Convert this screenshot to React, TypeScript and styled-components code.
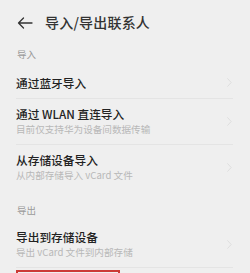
import React from "react";
import styled, { createGlobalStyle } from "styled-components";

const GlobalStyle = createGlobalStyle`
  html, body {
    margin: 0;
    padding: 0;
    background: #efefef;
  }
  body {
    font-family: "Noto Sans CJK SC", "Noto Sans", sans-serif;
    overflow: hidden;
  }
`;

type Item = { title: string; sub?: string };

const importItems: Item[] = [
  { title: "通过蓝牙导入" },
  { title: "通过 WLAN 直连导入", sub: "目前仅支持华为设备间数据传输" },
  { title: "从存储设备导入", sub: "从内部存储导入 vCard 文件" },
];

const exportItems: Item[] = [{ title: "导出到存储设备", sub: "导出 vCard 文件到内部存储" }];

const BackArrow = () => (
  <svg width="16" height="12" viewBox="0 0 16 12" fill="none">
    <path d="M15 6H1.5M6.5 1L1.5 6l5 5" stroke="#333" strokeWidth="1.3" strokeLinecap="round" strokeLinejoin="round" />
  </svg>
);

const Chevron = () => (
  <svg width="5" height="9" viewBox="0 0 5 9" fill="none">
    <path d="M0.7 0.7L4.2 4.5L0.7 8.3" stroke="#dedede" strokeWidth="1" strokeLinecap="round" strokeLinejoin="round" />
  </svg>
);

const ListRow = ({ item, divider }: { item: Item; divider: boolean }) => (
  <Row $tall={!!item.sub} $divider={divider}>
    <div className="texts">
      <div className="title">{item.title}</div>
      {item.sub && <div className="sub">{item.sub}</div>}
    </div>
    <Chevron />
  </Row>
);

const App = () => {
  return (
    <Page>
      <GlobalStyle />
      <Header>
        <BackArrow />
        <span>导入/导出联系人</span>
      </Header>

      <SectionLabel $top={3} $bottom={6}>导入</SectionLabel>
      {importItems.map((item, i) => (
        <ListRow key={item.title} item={item} divider={i < importItems.length - 1} />
      ))}

      <SectionLabel $top={12} $bottom={5}>导出</SectionLabel>
      {exportItems.map((item) => (
        <ListRow key={item.title} item={item} divider />
      ))}

      <Highlight />
    </Page>
  );
};

export default App;

const Page = styled.div`
  width: 250px;
  height: 273px;
  background: #efefef;
  display: flex;
  flex-direction: column;
  overflow: hidden;
  & > * {
    flex-shrink: 0;
  }
`;

const Header = styled.div`
  height: 44px;
  display: flex;
  align-items: center;
  gap: 12px;
  padding-left: 17px;
  box-sizing: border-box;
  span {
    font-size: 14px;
    font-weight: 500;
    color: #333;
    letter-spacing: 0.2px;
  }
  svg {
    margin-top: 1px;
  }
`;

const SectionLabel = styled.div<{ $top: number; $bottom: number }>`
  padding: ${(p) => p.$top}px 17px ${(p) => p.$bottom}px;
  font-size: 9.5px;
  line-height: 14px;
  color: #9a9a9a;
`;

const Row = styled.div<{ $tall: boolean; $divider: boolean }>`
  height: ${(p) => (p.$tall ? 46 : 32)}px;
  margin: 0 17px 0 16px;
  display: flex;
  align-items: center;
  justify-content: space-between;
  box-sizing: border-box;
  padding-right: 1px;
  border-bottom: ${(p) => (p.$divider ? "1px solid #e4e4e4" : "1px solid transparent")};
  .texts {
    display: flex;
    flex-direction: column;
    gap: 1px;
  }
  .title {
    font-size: 11.7px;
    line-height: 15px;
    font-weight: 500;
    color: #222;
  }
  .sub {
    font-size: 9.6px;
    line-height: 15px;
    color: #b8b8b8;
  }
`;

const Highlight = styled.div`
  margin: 2px 0 0 16px;
  width: 104px;
  height: 12px;
  border: 2px solid #cc3a36;
  border-bottom: none;
  box-sizing: border-box;
`;
